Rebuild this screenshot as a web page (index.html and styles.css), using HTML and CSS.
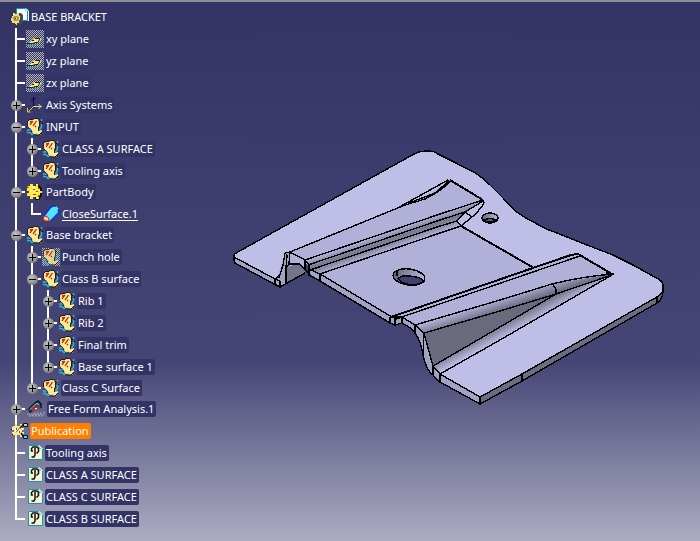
FILE: index.html
```html
<!DOCTYPE html>
<html lang="en">
<head>
  <meta charset="UTF-8">
  <meta name="viewport" content="width=device-width, initial-scale=1.0">
  <title>Base Bracket</title>
  <link rel="stylesheet" href="styles.css">
</head>
<body>
  <!-- Shared icons -->
  <svg class="defs" width="0" height="0" aria-hidden="true">
    <defs>
      <pattern id="checker" width="2" height="2" patternUnits="userSpaceOnUse">
        <path d="M0 0h1v1H0zM1 1h1v1H1z" fill="#b4b4b4"/>
      </pattern>
      <pattern id="dots" width="2" height="2" patternUnits="userSpaceOnUse">
        <path d="M0 0h1v1H0zM1 1h1v1H1z" fill="#ffe9a0"/>
      </pattern>
      <symbol id="part" viewBox="0 0 18 20">
        <path d="M6 1h9l3 3v10H6z" fill="#fff"/>
        <path d="M5.500 7V1.500h10M16.500 4v9.500H10" fill="none" stroke="#00a0a8"/>
        <path d="M14 1l3 3h-3z" fill="#7fe8f0"/>
        <path d="M7 6h3l2 2v6l-2 3H7z" fill="#4a4a4a"/>
        <path d="M2 6h2v1h2V6h2v3h1v4H8v3H6v2H4v-2H1v-2H0v-3h1V8h1z" fill="#f4dc7c"/>
        <path d="M3 10h4v3H3z" fill="#fff3b0" stroke="#6b5a10"/>
        <path d="M1 8h1v1H1zM0 14h1v1H0zM4 17h1v1H4zM4 11h1v1H4z" fill="#3a3208"/>
      </symbol>
      <symbol id="plane" viewBox="0 0 18 18">
        <path d="M0 0h18v18H0z" fill="url(#checker)"/>
        <path d="M3 13l5-5h8l-3 5z" fill="#f6e27a"/>
        <path d="M1 13.500h6l2-1h3l2-4M6 10.500h2M9 8.500h5" fill="none" stroke="#222"/>
        <path d="M1 15.500h6l2-1h3M14 12.500l2-2v-3" fill="none" stroke="#2aa8c0"/>
        <path d="M5 12h1v1H5zM9 11h1v1H9z" fill="#fff"/>
      </symbol>
      <symbol id="axis" viewBox="0 0 18 18">
        <path d="M7.500 10V1M5 3.500h2M8 2.500h2" fill="none" stroke="#08084c"/>
        <path d="M7.500 10.500h8M12.500 8l2.500 2.500-2.500 2.500" fill="none" stroke="#f0e08c"/>
        <path d="M7.500 10.500l-5 5M1.500 12v4h3" fill="none" stroke="#e8c840"/>
      </symbol>
      <symbol id="body" viewBox="0 0 18 18">
        <path d="M2 3l2-1h3l1-1h4l1 3v4l-1 2v3l4-1v2l-2 3H8l-2-3-1-3-2-1-1-2z" fill="#ffe98e"/>
        <path d="M1.500 8V3.500l2-2H7l1-1h4l1.500 2V8l-1 2v3M2 9.500l2 1.500 2 3" fill="none" stroke="#1c1c1c"/>
        <path d="M4 7l3-4M7 8l3.500-5M4 4.500L5.500 3M9 9l1-1" stroke="#a81414" stroke-width="1.200"/>
        <path d="M1 12.500l2-1 1.500 1M1 14.500h3l2 2h5M15.500 1v2M15.500 6v3l-2 3" fill="none" stroke="#2cb8dc" stroke-width="1.400"/>
        <path d="M7 17h6l3-3" fill="none" stroke="#111"/>
        <path d="M14 3h1v1h-1zM16 5h1v1h-1z" fill="#0c0c30"/>
      </symbol>
      <symbol id="hidden-body" viewBox="0 0 18 18">
        <path d="M0 0h18v18H0z" fill="url(#checker)"/>
        <g opacity="0.8"><use href="#body"/></g>
      </symbol>
      <symbol id="gear" viewBox="0 0 18 18">
        <path d="M9 2h4l3 3v8l-3 4H9z" fill="#111"/>
        <path d="M1 3h3V1h3v2h3V1h2v3l2 2v2h2v2h-2v2l-1 1v3h-3v-2H7v2H4v-3H1v-3h2V8H1V5h2z" fill="#ffe838"/>
        <path d="M8 5v7M11 6v5M5 7v3M6 4h3M6 13h3" stroke="#fff9c0"/>
        <path d="M7 6.500h2M10 8.500h2M7 11.500h3M12.500 4v2M12.500 12v2" stroke="#6b5a00"/>
      </symbol>
      <symbol id="close-surface" viewBox="0 0 18 18">
        <path d="M2 11l6-8 3-2h3l3 3v4l-5 5-3 3H4l-3-2z" fill="#4fe4ff"/>
        <path d="M2 11l6-8 3-2h3M16.500 4v4l-5 5-3 3" fill="none" stroke="#1228d8" stroke-width="1.400"/>
        <path d="M2 11l4 1 1 4H3l-2-2z" fill="#ffd890"/>
        <path d="M2 11l3 .5L7 14v2H4l-3-2z" fill="none" stroke="#d01818"/>
      </symbol>
      <symbol id="analysis" viewBox="0 0 20 18">
        <path d="M2 9l7-7 3-1 3 3-1 5-2-2-3 1-2 4H5z" fill="#3a4f66"/>
        <path d="M2 10l7-7 3-2 3 3v4M3 12l3-1" fill="none" stroke="#111" stroke-width="1.400"/>
        <path d="M4 9.500l6-6 3 1" fill="none" stroke="#6cdcf0"/>
        <path d="M6.500 12V8.500l3-2M11 8l3 .5" fill="none" stroke="#d02020" stroke-width="1.600"/>
        <path d="M9 8h2v1H9z" fill="#fff"/>
        <path d="M1 14.500l2-1 1 3 2-3 1 3 2-4 1 4 2-4 1 4 2-4 1 4 2-2v-3" fill="none" stroke="#a0a0aa"/>
      </symbol>
      <symbol id="publication" viewBox="0 0 18 18">
        <path d="M2 4h2V2h2v2h3V2h2v4h2v2h-2v2h2v2h-2v3H9v-2H6v3H4v-3H1v-3h2V8H1V5h1z" fill="#f8e898"/>
        <path d="M4 6h5v5H4z" fill="#fffbd8"/>
        <path d="M5 10.500l4-5M5.500 6v2M8.500 9v2" stroke="#6b5a10"/>
        <path d="M0 7h1v1H0zM1 12h1v1H1z" fill="#111"/>
        <path d="M9 6l3-3h2M10 11l2 3h3" fill="none" stroke="#111" stroke-width="1.500"/>
        <path d="M12.500 1.500h4v3h-4z" fill="#f0c8a0" stroke="#111"/>
        <path d="M12.500 13.500h4v3h-4z" fill="#50d8f0" stroke="#111"/>
      </symbol>
      <symbol id="published" viewBox="0 0 18 18">
        <path d="M2 1h11l4 4v11H2z" fill="#fff"/>
        <path d="M2 1h11l4 4v11H2z" fill="url(#dots)"/>
        <path d="M2.500 16V1.500H13M16.500 5v10.500H2" fill="none" stroke="#00a0a8"/>
        <path d="M12 1l4 4h-4z" fill="#58d8f0"/>
        <path d="M7 7H5.500V4.500L7 3h4l1.500 1.500v3L10.500 9.500M9 4v7l-1 2H5.500" fill="none" stroke="#111" stroke-width="1.500"/>
      </symbol>
    </defs>
  </svg>

  <div class="workspace">
    <nav class="spec-tree" aria-label="Specification tree">
      <div class="row root"><svg class="icon icon-tall"><use href="#part"/></svg><span class="label">BASE BRACKET</span></div>
      <ul>
        <li><div class="row leaf"><svg class="icon"><use href="#plane"/></svg><span class="label">xy plane</span></div></li>
        <li><div class="row leaf"><svg class="icon"><use href="#plane"/></svg><span class="label">yz plane</span></div></li>
        <li><div class="row leaf"><svg class="icon"><use href="#plane"/></svg><span class="label">zx plane</span></div></li>
        <li><div class="row"><button class="toggle plus" aria-label="Expand Axis Systems"></button><svg class="icon"><use href="#axis"/></svg><span class="label">Axis Systems</span></div></li>
        <li>
          <div class="row"><button class="toggle" aria-label="Collapse INPUT"></button><svg class="icon"><use href="#body"/></svg><span class="label">INPUT</span></div>
          <ul>
            <li><div class="row"><button class="toggle plus" aria-label="Expand CLASS A SURFACE"></button><svg class="icon"><use href="#body"/></svg><span class="label">CLASS A SURFACE</span></div></li>
            <li><div class="row"><button class="toggle plus" aria-label="Expand Tooling axis"></button><svg class="icon"><use href="#body"/></svg><span class="label">Tooling axis</span></div></li>
          </ul>
        </li>
        <li>
          <div class="row"><button class="toggle" aria-label="Collapse PartBody"></button><svg class="icon"><use href="#gear"/></svg><span class="label">PartBody</span></div>
          <ul>
            <li><div class="row leaf"><svg class="icon"><use href="#close-surface"/></svg><a class="label in-work" href="#closesurface">CloseSurface.1</a></div></li>
          </ul>
        </li>
        <li>
          <div class="row"><button class="toggle" aria-label="Collapse Base bracket"></button><svg class="icon"><use href="#body"/></svg><span class="label">Base bracket</span></div>
          <ul>
            <li><div class="row"><button class="toggle plus" aria-label="Expand Punch hole"></button><svg class="icon"><use href="#hidden-body"/></svg><span class="label">Punch hole</span></div></li>
            <li>
              <div class="row"><button class="toggle" aria-label="Collapse Class B surface"></button><svg class="icon"><use href="#body"/></svg><span class="label">Class B surface</span></div>
              <ul>
                <li><div class="row"><button class="toggle plus" aria-label="Expand Rib 1"></button><svg class="icon"><use href="#body"/></svg><span class="label">Rib 1</span></div></li>
                <li><div class="row"><button class="toggle plus" aria-label="Expand Rib 2"></button><svg class="icon"><use href="#body"/></svg><span class="label">Rib 2</span></div></li>
                <li><div class="row"><button class="toggle plus" aria-label="Expand Final trim"></button><svg class="icon"><use href="#body"/></svg><span class="label">Final trim</span></div></li>
                <li><div class="row"><button class="toggle plus" aria-label="Expand Base surface 1"></button><svg class="icon"><use href="#body"/></svg><span class="label">Base surface 1</span></div></li>
              </ul>
            </li>
            <li><div class="row"><button class="toggle plus" aria-label="Expand Class C Surface"></button><svg class="icon"><use href="#body"/></svg><span class="label">Class C Surface</span></div></li>
          </ul>
        </li>
        <li class="open"><div class="row"><button class="toggle plus" aria-label="Expand Free Form Analysis.1"></button><svg class="icon icon-wide"><use href="#analysis"/></svg><span class="label">Free Form Analysis.1</span></div></li>
      </ul>
      <div class="row root trunk"><svg class="icon"><use href="#publication"/></svg><span class="label selected">Publication</span></div>
      <ul>
        <li><div class="row leaf"><svg class="icon"><use href="#published"/></svg><span class="label">Tooling axis</span></div></li>
        <li><div class="row leaf"><svg class="icon"><use href="#published"/></svg><span class="label">CLASS A SURFACE</span></div></li>
        <li><div class="row leaf"><svg class="icon"><use href="#published"/></svg><span class="label">CLASS C SURFACE</span></div></li>
        <li><div class="row leaf"><svg class="icon"><use href="#published"/></svg><span class="label">CLASS B SURFACE</span></div></li>
      </ul>
    </nav>

    <main class="viewport">
      <svg class="model" viewBox="224 2 476 539" role="img" aria-label="Base bracket model">
        <defs>
          <linearGradient id="bend-top" gradientUnits="userSpaceOnUse" x1="480" y1="305" x2="484" y2="317">
            <stop offset="0" stop-color="#b0b0d8"/>
            <stop offset="1" stop-color="#6a6a80"/>
          </linearGradient>
          <linearGradient id="bend-bottom" gradientUnits="userSpaceOnUse" x1="485" y1="334" x2="491" y2="345">
            <stop offset="0" stop-color="#77778e"/>
            <stop offset="1" stop-color="#bebee6"/>
          </linearGradient>
          <linearGradient id="rib-wall" gradientUnits="userSpaceOnUse" x1="376" y1="236" x2="382" y2="253">
            <stop offset="0" stop-color="#b0b0d8"/>
            <stop offset="0.45" stop-color="#77778e"/>
            <stop offset="0.7" stop-color="#8c8ca8"/>
            <stop offset="1" stop-color="#b0b0d8"/>
          </linearGradient>
          <linearGradient id="bore">
            <stop offset="0" stop-color="#66667a"/>
            <stop offset="1" stop-color="#b8b8de"/>
          </linearGradient>
        </defs>

        <!-- plate thickness -->
        <path class="side" d="M480 397L500 386 522 374 657 297Q663 293 663 284V291Q663 299 657 303L522 381 500 393 480 404Z"/>
        <path class="front" d="M234 257L276 279 285 276 287 283 280 287 274 284 235 263Q233 260 234 257Z"/>
        <path class="front" d="M308 264L320 274 392 317 402 317 415 325 424 333 433 366 440 374 480 397V404L440 382 433 375Q426 370 423 355 421 341 415 333 412 328 402 323L395 325 390 323 320 281 310 274Z"/>

        <!-- plate -->
        <path class="plate" d="M234 257Q233 255 236 253L414 154Q420 151 425 151H430Q434 151 438 154L456 163 477 174Q485 180 490 185L503 198Q510 206 517 212 525 218 537 224 547 230 557 233L587 245 613 255 633 265 660 280Q664 283 663 288 663 294 657 297L522 374 480 397 440 374 433 366 424 333 415 325 402 317 392 317 320 274 290 252 276 279Z"/>

        <!-- pocket floor -->
        <path class="floor" d="M310 270L320 274 392 317 534 268 460 226Z"/>
        <path class="floor" d="M290 252L405 205Q432 195 450 180L483 200 466 212 305 260Z"/>

        <!-- upper rib wall -->
        <path fill="url(#rib-wall)" d="M305 260L440 214 483 200 467 220 460 226 320 274 310 270Z"/>
        <path class="plate" d="M456 221L466 212 483 200 484 204 472 217 460 226Z"/>

        <!-- lower rib -->
        <path class="floor" d="M392 317L530 269 578 254 612 274 552 284 415 325 402 317Z"/>
        <path fill="url(#bend-top)" d="M415 325L500 300 552 284 612 274 556 294 500 311 424 333Z"/>
        <path class="facet" d="M424 333L500 311 556 294 500 327 433 366Z"/>
        <path fill="url(#bend-bottom)" d="M433 366L500 327 556 294 612 275 500 340 440 374Z"/>

        <!-- opening under the upper rib -->
        <path class="cavity" d="M287 267L293 264H300L305 270V273L287 284Z"/>
        <path class="floor" d="M290 252L305 260 306 271 300 265H293L287 267Z"/>
        <path class="front" d="M285 253L290 252V264L287 267 286 284 280 287 277 279Z"/>

        <!-- edges -->
        <g class="edge">
          <path d="M234 257Q233 255 236 253L414 154Q420 151 425 151H430Q434 151 438 154L456 163 477 174Q485 180 490 185L503 198Q510 206 517 212 525 218 537 224 547 230 557 233L587 245 613 255 633 265 660 280Q664 283 663 288 663 294 657 297L522 374 480 397 440 374 433 366"/>
          <path d="M234 257V260L235 263 274 284 280 287 287 283 305 273M234 257L275 279M275 279V284M275 279L279 276M280 281V287M275 279L280 281"/>
          <path d="M285 253L283 265 279 278M285 253L290 252 289 264 286 268V283M285 253L287 255 286 268M290 252L305 260V269M289 264H300L305 270M305 260L309 265V275L320 281M305 269L309 274M309 269L320 274V281"/>
          <path d="M320 274L392 317M320 281L390 323 395 325V318M390 317V323M395 325L402 323V317L393 317M402 323Q412 328 415 333 421 341 423 355 426 370 433 375L440 382 480 404V397M402 317L415 325V333M415 325L424 333 423 355M424 333L433 366V375M440 374V382M433 366L440 374"/>
          <path d="M480 404L500 393 522 381 657 303Q663 299 663 291V285M522 374V381M657 297V303"/>
          <path d="M290 252L405 205M401 206L412 200 448 180M405 205L425 199Q440 192 451 181M409 203L435 193 449 181"/>
          <path d="M305 260L440 214 483 200M308 265L440 220 465 212 483 201M310 270L440 226 457 221M320 274L440 233 461 226"/>
          <path d="M457 221L461 226 472 217Q480 210 484 203L483 200M465 212L472 217M457 221L465 212"/>
          <path d="M415 325L500 300 552 284Q580 277 612 274M424 333L500 311 556 294 612 275M433 366L500 327 556 294M440 374L500 340 612 275M552 284Q557 288 556 294"/>
          <path d="M396 319L530 273 580 256"/>
        </g>
        <g class="edge heavy">
          <path d="M450 180L483 200M461 226L534 268M391 317L530 269 565 257Q573 254 578 254L612 274M606 273L614 274"/>
        </g>

        <!-- holes -->
        <g class="hole">
          <ellipse cx="409" cy="277" rx="16" ry="8" transform="rotate(8 409 277)" fill="url(#bore)"/>
          <path d="M398 279Q400 275 409 276 421 277 424 281 419 285 411 285 401 283 398 279Z" fill="#404071"/>
          <path d="M397 271V276"/>
          <ellipse cx="490" cy="218" rx="8" ry="5" fill="url(#bore)"/>
          <path d="M484 220Q490 217 496 220L492 222H487Z" fill="#5a5a78"/>
        </g>
      </svg>
    </main>
  </div>
</body>
</html>
```

FILE: styles.css
```css
* {
  box-sizing: border-box;
}
body {
  margin: 0;
  font-family: "Noto Sans", "Open Sans", sans-serif;
  font-size: 11px;
  line-height: 16px;
  color: #fff;
}
.defs {
  display: block;
}
.workspace {
  display: flex;
  min-height: 100vh;
  border-top: 2px solid #8f8f93;
  background: linear-gradient(#333366, #464676 67%, #acacc2);
}

/* Specification tree */
.spec-tree {
  flex: 0 0 32%;
  padding-top: 4px;
  white-space: nowrap;
}
.spec-tree ul {
  margin: 0;
  padding: 0;
  list-style: none;
}
.spec-tree ul ul {
  margin-bottom: -1px;
  padding-left: 16px;
}
/* trunk on the left, branch towards the icon */
.spec-tree li {
  background-image: linear-gradient(#fff, #fff), linear-gradient(#fff, #fff);
  background-repeat: no-repeat;
  background-position: 15px 0, 15px 10px;
  background-size: 2px 100%, 10px 2px;
}
.spec-tree li:last-child {
  background-size: 2px 12px, 10px 2px;
}
.spec-tree li.open {
  background-size: 2px 100%, 10px 2px;
}
.row {
  display: flex;
  align-items: center;
  height: 22px;
  padding-left: 11px;
}
.leaf {
  padding-left: 26px;
}
.trunk {
  background: linear-gradient(#fff, #fff) 15px 0 / 2px 100% no-repeat;
}
.toggle {
  width: 11px;
  height: 11px;
  margin: 0 4px 0 0;
  padding: 0;
  border: none;
  border-radius: 50%;
  cursor: pointer;
  background:
    linear-gradient(#000, #000) center / 7px 1px no-repeat,
    radial-gradient(circle at 40% 35%, #c4c4c4, #8c8c8c 60%, #5c5c5c);
}
.toggle.plus {
  background:
    linear-gradient(#000, #000) center / 7px 1px no-repeat,
    linear-gradient(#000, #000) center / 1px 7px no-repeat,
    radial-gradient(circle at 40% 35%, #c4c4c4, #8c8c8c 60%, #5c5c5c);
}
.icon {
  flex: none;
  width: 18px;
  height: 18px;
  margin-right: 1px;
}
.icon-tall {
  height: 20px;
}
.icon-wide {
  width: 20px;
}
.label {
  padding: 0 2px 0 1px;
  border-radius: 2px;
  background-color: #333366;
  color: #fff;
}
.in-work {
  background: none;
  text-underline-offset: 2px;
}
.selected {
  background-color: #ff8000;
}

/* 3D view */
.viewport {
  flex: 1;
  min-width: 0;
}
.model {
  display: block;
  width: 100%;
  height: auto;
  shape-rendering: crispEdges;
}
.plate {
  fill: #bebee6;
}
.floor {
  fill: #b0b0d8;
}
.front {
  fill: #a2a2c4;
}
.side {
  fill: #6c6c80;
}
.facet {
  fill: #6a6a7e;
}
.cavity {
  fill: #74748a;
}
.edge {
  fill: none;
  stroke: #000;
  stroke-width: 1.4;
}
.heavy {
  stroke-width: 2;
}
.hole {
  stroke: #000;
  stroke-width: 1.4;
}
```
